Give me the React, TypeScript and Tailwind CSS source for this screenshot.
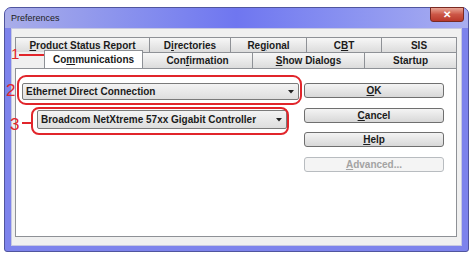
import type { ReactNode } from 'react';

function U({ children }: { children: ReactNode }) {
  return <span className="underline underline-offset-[1px]">{children}</span>;
}

function Tab({ w, first, children }: { w: string; first?: boolean; children: ReactNode }) {
  return (
    <div
      className={`${w} ${first ? 'border-l' : ''} h-full flex items-center justify-center border-t border-r border-[#8e9196] bg-gradient-to-b from-[#f7f7f7] to-[#dcdcdc] text-[10px] font-bold text-[#1b1b1b]`}
    >
      {children}
    </div>
  );
}

function Button({ children, disabled }: { children: ReactNode; disabled?: boolean }) {
  return (
    <div
      className={
        disabled
          ? 'h-[15px] flex items-center justify-center rounded-[3px] border border-[#b8bcc0] bg-[#f4f4f4] text-[10px] font-bold text-[#a3a3a3]'
          : 'h-[15px] flex items-center justify-center rounded-[3px] border border-[#6f6f6f] bg-gradient-to-b from-[#f4f4f4] to-[#d8d8d8] text-[10px] font-bold text-[#1b1b1b]'
      }
    >
      {children}
    </div>
  );
}

function Dropdown({ w, h, children }: { w: string; h: string; children: ReactNode }) {
  return (
    <div
      className={`${w} ${h} flex items-center justify-between pl-[3px] pr-[4px] rounded-[2px] border border-[#7a7a7a] bg-gradient-to-b from-[#f3f3f3] to-[#dedede] text-[10px] font-bold text-[#1b1b1b]`}
    >
      <span>{children}</span>
      <svg width="6" height="4" viewBox="0 0 6 4">
        <path d="M0 0h6L3 3.5z" fill="#222" />
      </svg>
    </div>
  );
}

export default function App() {
  return (
    <div
      className="relative w-[474px] h-[259px] bg-white overflow-hidden pt-[7px] pl-[4px]"
      style={{ fontFamily: '"Liberation Sans", Arial, sans-serif' }}
    >
      {/* window */}
      <div className="w-[465px] h-[245px] flex flex-col rounded-t-[7px] rounded-b-[3px] border border-[#50559e] bg-[#7d83ec]">
        <div className="h-[20px] flex items-start justify-between pl-[6px] pr-[4px] rounded-t-[6px] bg-gradient-to-r from-[#a9ade9] via-[#6f76f0] to-[#a9aef0]">
          <span className="mt-[4px] text-[9px] text-[#222]">Preferences</span>
          <div className="-mt-[1px] w-[34px] h-[15px] flex items-center justify-center rounded-b-[3px] border border-[#7a2a22] bg-gradient-to-b from-[#e7a394] via-[#cc5646] to-[#b9382a]">
            <span className="text-[10px] font-bold text-white leading-none">✕</span>
          </div>
        </div>

        <div className="flex-1 mx-[6px] mb-[5px] flex flex-col border border-[#c7c9e2] bg-[#f0f0f0] pt-[8px] pl-[3px] pr-[4px] pb-[8px]">
          {/* tab row 1 */}
          <div className="flex h-[15px]">
            <Tab w="w-[135px]" first>
              <U>P</U>roduct Status Report
            </Tab>
            <Tab w="w-[81px]">
              D<U>i</U>rectories
            </Tab>
            <Tab w="w-[76px]">
              Re<U>g</U>ional
            </Tab>
            <Tab w="w-[75px]">
              C<U>B</U>T
            </Tab>
            <Tab w="w-[75px]">SIS</Tab>
          </div>
          {/* tab row 2 */}
          <div className="flex h-[16px]">
            <div className="w-[29px]" />
            <div className="relative z-10 w-[99px] h-[18px] -mt-[2px] flex items-center justify-center border-t border-l border-r border-[#8e9196] bg-white text-[10px] font-bold text-[#1b1b1b]">
              Co<U>m</U>munications
            </div>
            <Tab w="w-[110px]">
              Con<U>f</U>irmation
            </Tab>
            <Tab w="w-[112px]">
              <U>S</U>how Dialogs
            </Tab>
            <Tab w="w-[92px]">Startup</Tab>
          </div>
          {/* panel */}
          <div className="flex-1 flex border border-[#8e9196] bg-white pt-[14px]">
            <div className="flex flex-col pl-[6px]">
              <Dropdown w="w-[277px]" h="h-[17px]">Ethernet Direct Connection</Dropdown>
              <div className="mt-[10px] pl-[15px]">
                <Dropdown w="w-[250px]" h="h-[19px]">Broadcom NetXtreme 57xx Gigabit Controller</Dropdown>
              </div>
            </div>
            <div className="ml-auto mr-[12px] w-[140px] flex flex-col gap-[9.5px]">
              <Button>
                <U>O</U>K
              </Button>
              <Button>
                <U>C</U>ancel
              </Button>
              <Button>
                <U>H</U>elp
              </Button>
              <Button disabled>
                <U>A</U>dvanced...
              </Button>
            </div>
          </div>
        </div>
      </div>

      {/* red annotations */}
      <div className="absolute left-[44px] top-[51px] w-[94px] h-[15px] rounded-[5px] border-2 border-[#e1252b]" />
      <div className="absolute left-[17px] top-[75px] w-[285px] h-[30px] rounded-[9px] border-2 border-[#e1252b]" />
      <div className="absolute left-[31px] top-[107px] w-[258px] h-[28px] rounded-[8px] border-2 border-[#e1252b]" />
      <span className="absolute left-[11px] top-[46px] text-[15px] leading-none text-[#e1252b]">1</span>
      <div className="absolute left-[19px] top-[54px] w-[25px] h-[2px] bg-[#e1252b]" />
      <span className="absolute left-[6px] top-[82px] text-[17px] leading-none text-[#e1252b]">2</span>
      <span className="absolute left-[10px] top-[116px] text-[17px] leading-none text-[#e1252b]">3</span>
      <div className="absolute left-[22px] top-[122px] w-[9px] h-[2px] bg-[#e1252b]" />
    </div>
  );
}
